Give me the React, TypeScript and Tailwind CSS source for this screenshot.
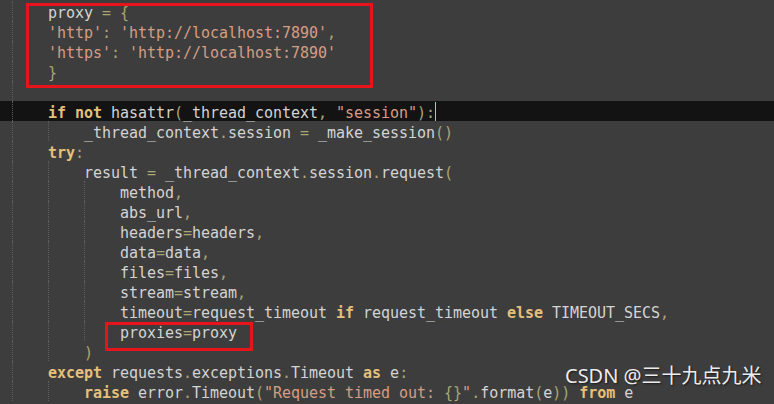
import React from 'react';

type Tok = [string, 'k' | 's' | 'p' | 'n'];
type Line = { indent: number; toks: Tok[]; active?: boolean };

const COLORS: Record<Tok[1], string> = {
  k: 'text-[#e5c07b] font-bold',
  s: 'text-[#d69d85]',
  p: 'text-[#a9a676]',
  n: 'text-[#d4d4d4]',
};

const LINES: Line[] = [
  { indent: 1, toks: [['proxy ', 'n'], ['=', 'p'], [' ', 'n'], ['{', 'p']] },
  { indent: 1, toks: [["'http'", 's'], [':', 'p'], [' ', 'n'], ["'http://localhost:7890'", 's'], [',', 'p']] },
  { indent: 1, toks: [["'https'", 's'], [':', 'p'], [' ', 'n'], ["'http://localhost:7890'", 's']] },
  { indent: 1, toks: [['}', 'p']] },
  { indent: 1, toks: [] },
  {
    indent: 1,
    active: true,
    toks: [['if not', 'k'], [' hasattr', 'n'], ['(', 'p'], ['_thread_context', 'n'], [',', 'p'], [' ', 'n'], ['"session"', 's'], ['):', 'p']],
  },
  { indent: 2, toks: [['_thread_context', 'n'], ['.', 'p'], ['session ', 'n'], ['=', 'p'], [' _make_session', 'n'], ['()', 'p']] },
  { indent: 1, toks: [['try', 'k'], [':', 'p']] },
  {
    indent: 2,
    toks: [['result ', 'n'], ['=', 'p'], [' _thread_context', 'n'], ['.', 'p'], ['session', 'n'], ['.', 'p'], ['request', 'n'], ['(', 'p']],
  },
  { indent: 3, toks: [['method', 'n'], [',', 'p']] },
  { indent: 3, toks: [['abs_url', 'n'], [',', 'p']] },
  { indent: 3, toks: [['headers', 'n'], ['=', 'p'], ['headers', 'n'], [',', 'p']] },
  { indent: 3, toks: [['data', 'n'], ['=', 'p'], ['data', 'n'], [',', 'p']] },
  { indent: 3, toks: [['files', 'n'], ['=', 'p'], ['files', 'n'], [',', 'p']] },
  { indent: 3, toks: [['stream', 'n'], ['=', 'p'], ['stream', 'n'], [',', 'p']] },
  {
    indent: 3,
    toks: [['timeout', 'n'], ['=', 'p'], ['request_timeout ', 'n'], ['if', 'k'], [' request_timeout ', 'n'], ['else', 'k'], [' TIMEOUT_SECS', 'n'], [',', 'p']],
  },
  { indent: 3, toks: [['proxies', 'n'], ['=', 'p'], ['proxy', 'n']] },
  { indent: 2, toks: [[')', 'p']] },
  {
    indent: 1,
    toks: [['except', 'k'], [' requests', 'n'], ['.', 'p'], ['exceptions', 'n'], ['.', 'p'], ['Timeout ', 'n'], ['as', 'k'], [' e', 'n'], [':', 'p']],
  },
  {
    indent: 2,
    toks: [
      ['raise', 'k'], [' error', 'n'], ['.', 'p'], ['Timeout', 'n'], ['(', 'p'], ['"Request timed out: ', 's'], ['{}', 'p'], ['"', 's'],
      ['.', 'p'], ['format', 'n'], ['(', 'p'], ['e', 'n'], ['))', 'p'], [' ', 'n'], ['from', 'k'], [' e', 'n'],
    ],
  },
];

function CodeLine({ line }: { line: Line }) {
  return (
    <div className={`flex h-[20px] pl-[12px] whitespace-pre ${line.active ? 'bg-[#131313]' : ''}`}>
      {Array.from({ length: line.indent }).map((_, i) => (
        <span key={i} className="w-[36px] h-full shrink-0 border-l border-dotted border-[#5e5e5e]" />
      ))}
      <span className="flex pt-[2px] leading-[20px]">
        {line.toks.map(([text, kind], i) => (
          <span key={i} className={COLORS[kind]}>
            {text}
          </span>
        ))}
        {line.active && <span className="inline-block w-px h-[19px] -mt-[1px] bg-[#8fd3bd]" />}
      </span>
    </div>
  );
}

export default function App() {
  return (
    <div
      className="relative w-[774px] h-[404px] overflow-hidden bg-[#3d3d3d] pt-px text-[15px] tracking-[-0.03px]"
      style={{ fontFamily: '"DejaVu Sans Mono", "Liberation Mono", monospace' }}
    >
      {LINES.map((line, i) => (
        <CodeLine key={i} line={line} />
      ))}

      {/* annotation boxes */}
      <div className="absolute left-[26px] top-[3px] w-[347px] h-[85px] border-[3px] border-[#e8141c]" />
      <div className="absolute left-[105px] top-[322px] w-[148px] h-[29px] border-[3px] border-[#e8141c]" />

      {/* watermark */}
      <div
        className="absolute left-[565px] top-[362px] text-[20px] leading-[28px] tracking-normal text-[#ececec] whitespace-nowrap [text-shadow:1px_1px_2px_rgba(0,0,0,0.6)]"
        style={{ fontFamily: '"Noto Sans", "Noto Sans CJK SC", sans-serif' }}
      >
        CSDN @三十九点九米
      </div>
    </div>
  );
}
